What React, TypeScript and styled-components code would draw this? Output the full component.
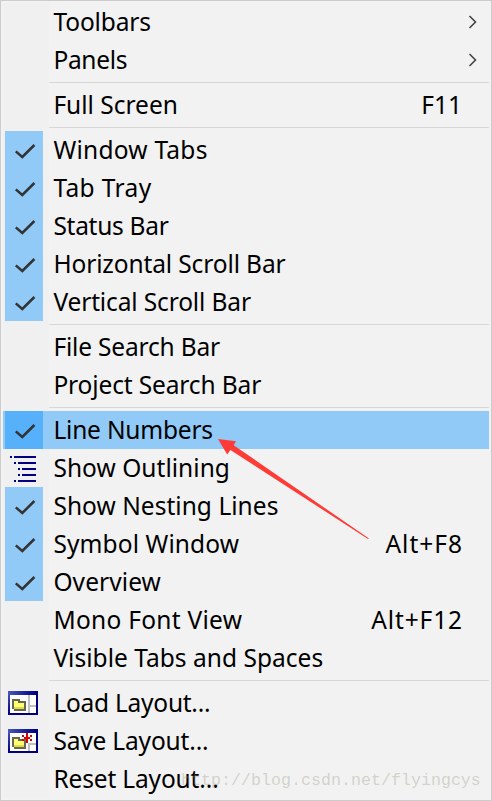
import React from "react";
import styled, { createGlobalStyle } from "styled-components";

const GlobalStyle = createGlobalStyle`
  body { margin: 0; background: #f2f2f2; }
`;

const Menu = styled.div`
  position: relative;
  box-sizing: border-box;
  width: 492px;
  height: 801px;
  padding: 2px;
  border: 1px solid #cccccc;
  background: linear-gradient(to right, #f0f0f0 46px, #f2f2f2 46px) 2px 2px / 486px 795px no-repeat #f2f2f2;
  overflow: hidden;
  font-family: "Noto Sans", sans-serif;
  font-size: 24.5px;
  color: #000;
`;

const Row = styled.div<{ $active?: boolean }>`
  display: flex;
  align-items: center;
  height: 38px;
  background: ${(p) => (p.$active ? "#91c9f7" : "transparent")};
`;

const Gutter = styled.div<{ $checked?: boolean; $active?: boolean }>`
  flex: none;
  width: 38px;
  height: 38px;
  margin-left: 2px;
  background: ${(p) => (p.$checked ? (p.$active ? "#56b0fa" : "#91c9f7") : "transparent")};
  svg { display: block; }
`;

const Label = styled.span<{ $spacing: number }>`
  flex: 1;
  margin-left: 10.4px;
  line-height: 38px;
  white-space: nowrap;
  letter-spacing: ${(p) => p.$spacing}px;
`;

const Shortcut = styled.span<{ $spacing: number }>`
  margin-right: ${(p) => 27 - p.$spacing}px;
  line-height: 38px;
  letter-spacing: ${(p) => p.$spacing}px;
`;

const Submenu = styled.svg`
  width: 10px;
  height: 14px;
  margin-right: 11px;
`;

const Separator = styled.div`
  height: 1px;
  margin: 3px 0 3px 46px;
  background: #d7d7d7;
`;

const Arrow = styled.svg`
  position: absolute;
  left: 214px;
  top: 434px;
`;

const Watermark = styled.span`
  position: absolute;
  left: 180px;
  top: 768px;
  font: 16.66px/24px "Liberation Mono", monospace;
  color: rgba(150, 150, 130, 0.36);
  white-space: nowrap;
`;

const CheckIcon = () => (
  <svg width="38" height="38" viewBox="0 0 38 38" fill="none">
    <path d="M10.8 20.4 17.3 26 29.4 14" stroke="#333" strokeWidth="2.5" />
  </svg>
);

const OutlineIcon = () => (
  <svg width="38" height="38" viewBox="0 0 38 38" fill="#000080" shapeRendering="crispEdges">
    <path d="M5 7h2v2H5zM9 7h22v2H9zM9 13h2v2H9zM13 13h18v2H13zM13 19h2v2h-2zM17 19h14v2H17zM13 25h2v2h-2zM17 25h14v2H17zM9 31h2v2H9zM13 31h18v2H13z" />
  </svg>
);

const LayoutIcon = ({ star }: { star?: boolean }) => (
  <svg width="38" height="38" viewBox="0 0 38 38" shapeRendering="crispEdges">
    <defs>
      <linearGradient id={star ? "barB" : "barA"}>
        <stop offset="0" stopColor="#4858b8" />
        <stop offset="1" stopColor="#000080" />
      </linearGradient>
      <linearGradient id={star ? "sideB" : "sideA"} x2="0" y2="1">
        <stop offset="0" stopColor="#4050b0" />
        <stop offset="1" stopColor="#000080" />
      </linearGradient>
    </defs>
    <path fill="#000080" d="M3 7h30v24H3z" />
    <path fill={star ? "url(#barB)" : "url(#barA)"} d="M3 7h28v4H3z" />
    <path fill={star ? "url(#sideB)" : "url(#sideA)"} d="M3 11h2v18H3z" />
    <path fill="#fff" d="M5 11h26v18H5z" />
    <path fill="#c0c0c0" d={star ? "M23 21h8v2h-6v6h-2z" : "M23 11h2v10h6v2h-6v6h-2z"} />
    <path fill="#686850" d="M7 15h8v2h6v10H9v-2H7z" />
    <path fill="#ffff70" d="M9 17h4v2h6v4H9z" />
    <path fill="#dcdc48" d="M9 23h10v2H9z" />
    {star && (
      <path
        fill="#dc0000"
        d="M21 11h2v10h-2zM17 13h2v2h-2zM25 13h2v2h-2zM19 15h6v2h-6zM17 17h2v2h-2zM25 17h2v2h-2z"
      />
    )}
  </svg>
);

const icons = {
  outline: <OutlineIcon />,
  load: <LayoutIcon />,
  save: <LayoutIcon star />,
};

interface Item {
  label: string;
  spacing?: number;
  checked?: boolean;
  active?: boolean;
  shortcut?: string;
  shortcutSpacing?: number;
  submenu?: boolean;
  icon?: keyof typeof icons;
}

const groups: Item[][] = [
  [
    { label: "Toolbars", spacing: -0.12, submenu: true },
    { label: "Panels", spacing: -0.3, submenu: true },
  ],
  [{ label: "Full Screen", shortcut: "F11" }],
  [
    { label: "Window Tabs", spacing: 0.25, checked: true },
    { label: "Tab Tray", spacing: 0.38, checked: true },
    { label: "Status Bar", spacing: -0.28, checked: true },
    { label: "Horizontal Scroll Bar", spacing: -0.12, checked: true },
    { label: "Vertical Scroll Bar", spacing: -0.13, checked: true },
  ],
  [
    { label: "File Search Bar", spacing: -0.18 },
    { label: "Project Search Bar", spacing: -0.13 },
  ],
  [
    { label: "Line Numbers", spacing: -0.2, checked: true, active: true },
    { label: "Show Outlining", spacing: 0.04, icon: "outline" },
    { label: "Show Nesting Lines", spacing: 0.04, checked: true },
    { label: "Symbol Window", spacing: 0.1, checked: true, shortcut: "Alt+F8", shortcutSpacing: 1 },
    { label: "Overview", spacing: 0.08, checked: true },
    { label: "Mono Font View", spacing: 0.28, shortcut: "Alt+F12", shortcutSpacing: 0.85 },
    { label: "Visible Tabs and Spaces", spacing: 0.03 },
  ],
  [
    { label: "Load Layout...", spacing: -0.25, icon: "load" },
    { label: "Save Layout...", spacing: -0.17, icon: "save" },
    { label: "Reset Layout...", spacing: -0.15 },
  ],
];

export default function App() {
  return (
    <>
      <GlobalStyle />
      <Menu>
        {groups.map((group, i) => (
          <React.Fragment key={i}>
            {i > 0 && <Separator />}
            {group.map((item) => (
              <Row key={item.label} $active={item.active}>
                <Gutter $checked={item.checked} $active={item.active}>
                  {item.checked && <CheckIcon />}
                  {item.icon && icons[item.icon]}
                </Gutter>
                <Label $spacing={item.spacing ?? 0}>{item.label}</Label>
                {item.shortcut && (
                  <Shortcut $spacing={item.shortcutSpacing ?? 0}>{item.shortcut}</Shortcut>
                )}
                {item.submenu && (
                  <Submenu viewBox="0 0 10 14" fill="none">
                    <path d="M1.5 1 7.5 7l-6 6" stroke="#444" strokeWidth="1.6" />
                  </Submenu>
                )}
              </Row>
            ))}
          </React.Fragment>
        ))}
        <Arrow width="160" height="110" viewBox="215 435 160 110">
          <path fill="#ff3b38" d="M218 439 236 441.2 233.7 445.2 369 538.5 368 539 230.4 450 227.2 454.5z" />
        </Arrow>
        <Watermark>http://blog.csdn.net/flyingcys</Watermark>
      </Menu>
    </>
  );
}
